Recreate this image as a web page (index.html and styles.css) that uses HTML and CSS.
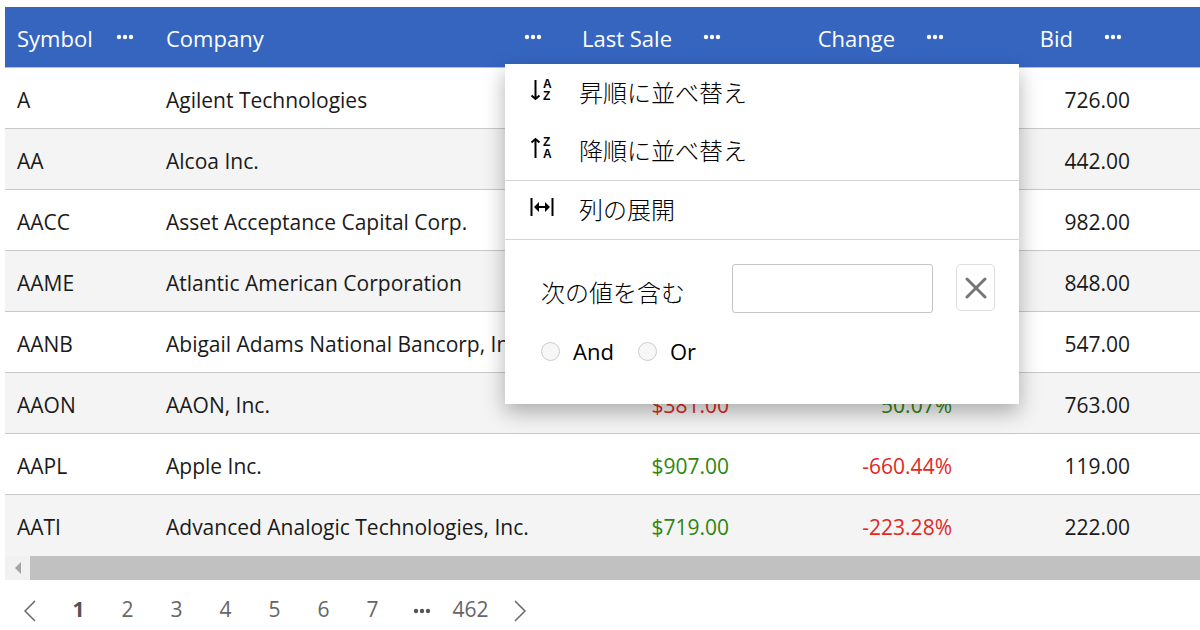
FILE: index.html
```html
<!DOCTYPE html>
<html lang="ja">
<head>
  <meta charset="utf-8">
  <title>Grid</title>
  <link rel="stylesheet" href="styles.css">
</head>
<body>
  <!-- Shared icons -->
  <svg class="icon-defs" aria-hidden="true">
    <symbol id="dots" viewBox="0 0 18 6">
      <circle cx="3" cy="3" r="2.200" />
      <circle cx="9" cy="3" r="2.200" />
      <circle cx="15" cy="3" r="2.200" />
    </symbol>
  </svg>

  <div class="grid">
    <table class="grid-table">
      <colgroup>
        <col class="col-symbol">
        <col class="col-company">
        <col class="col-sale">
        <col class="col-change">
        <col class="col-bid">
        <col>
      </colgroup>
      <thead>
        <tr>
          <th><div class="head"><span>Symbol</span><button class="menu-btn" aria-label="Symbol"><svg><use href="#dots" /></svg></button></div></th>
          <th><div class="head"><span>Company</span><button class="menu-btn" aria-label="Company"><svg><use href="#dots" /></svg></button></div></th>
          <th><div class="head head-num"><span>Last Sale</span><button class="menu-btn" aria-label="Last Sale"><svg><use href="#dots" /></svg></button></div></th>
          <th><div class="head head-num"><span>Change</span><button class="menu-btn" aria-label="Change"><svg><use href="#dots" /></svg></button></div></th>
          <th><div class="head head-num"><span>Bid</span><button class="menu-btn" aria-label="Bid"><svg><use href="#dots" /></svg></button></div></th>
          <th></th>
        </tr>
      </thead>
      <tbody>
        <tr><td>A</td><td>Agilent Technologies</td><td class="num"></td><td class="num"></td><td class="num">726.00</td><td></td></tr>
        <tr><td>AA</td><td>Alcoa Inc.</td><td class="num"></td><td class="num"></td><td class="num">442.00</td><td></td></tr>
        <tr><td>AACC</td><td>Asset Acceptance Capital Corp.</td><td class="num"></td><td class="num"></td><td class="num">982.00</td><td></td></tr>
        <tr><td>AAME</td><td>Atlantic American Corporation</td><td class="num"></td><td class="num"></td><td class="num">848.00</td><td></td></tr>
        <tr><td>AANB</td><td>Abigail Adams National Bancorp, Inc.</td><td class="num"></td><td class="num"></td><td class="num">547.00</td><td></td></tr>
        <tr><td>AAON</td><td>AAON, Inc.</td><td class="num down">$381.00</td><td class="num up">50.07%</td><td class="num">763.00</td><td></td></tr>
        <tr><td>AAPL</td><td>Apple Inc.</td><td class="num up">$907.00</td><td class="num down">-660.44%</td><td class="num">119.00</td><td></td></tr>
        <tr><td>AATI</td><td>Advanced Analogic Technologies, Inc.</td><td class="num up">$719.00</td><td class="num down">-223.28%</td><td class="num">222.00</td><td></td></tr>
      </tbody>
    </table>

    <div class="scrollbar">
      <div class="scroll-arrow"><svg width="6" height="12"><path d="M6 0v12L0 6z" fill="#a3a3a3" /></svg></div>
      <div class="scroll-thumb"></div>
    </div>

    <!-- Column menu -->
    <div class="popup">
      <div class="popup-group">
        <button class="popup-item">
          <svg class="item-icon" width="24" height="28">
            <path d="M5.500 4v19M1.500 19.500l4 3.500 4-3.500" fill="none" stroke="#000" stroke-width="2" />
            <text x="13" y="12">A</text>
            <text x="13" y="24">Z</text>
          </svg>
          <span>昇順に並べ替え</span>
        </button>
        <button class="popup-item">
          <svg class="item-icon" width="24" height="28">
            <path d="M5.500 24V5M1.500 8.500l4-3.500 4 3.500" fill="none" stroke="#000" stroke-width="2" />
            <text x="13" y="12">Z</text>
            <text x="13" y="24">A</text>
          </svg>
          <span>降順に並べ替え</span>
        </button>
      </div>
      <div class="popup-group">
        <button class="popup-item">
          <svg class="item-icon" width="24" height="28">
            <path d="M1.500 5v18M22.500 5v18M7 14h10" fill="none" stroke="#000" stroke-width="2" />
            <path d="M4 14l5-5v10zM20 14l-5-5v10z" />
          </svg>
          <span>列の展開</span>
        </button>
      </div>
      <div class="filter">
        <div class="filter-row">
          <label for="filter-value">次の値を含む</label>
          <input class="filter-input" type="text" id="filter-value">
          <button class="clear-btn" aria-label="Clear">
            <svg width="22" height="22"><path d="M2 2l18 18M20 2L2 20" stroke="#777" stroke-width="3" stroke-linecap="round" /></svg>
          </button>
        </div>
        <div class="radios">
          <label><input type="radio" name="op">And</label>
          <label><input type="radio" name="op">Or</label>
        </div>
      </div>
    </div>
  </div>

  <nav class="pager">
    <button aria-label="Previous"><svg class="chevron" width="12" height="22"><path d="M11 1L1 11l10 10" /></svg></button>
    <button class="page current">1</button>
    <button class="page">2</button>
    <button class="page">3</button>
    <button class="page">4</button>
    <button class="page">5</button>
    <button class="page">6</button>
    <button class="page">7</button>
    <button aria-label="More"><svg class="more" width="18" height="6"><use href="#dots" /></svg></button>
    <button class="page">462</button>
    <button aria-label="Next"><svg class="chevron" width="12" height="22"><path d="M1 1l10 10L1 21" /></svg></button>
  </nav>
</body>
</html>
```
FILE: styles.css
```css
* {
  box-sizing: border-box;
}
body {
  margin: 7px 0 0 5px;
  background-color: #fff;
  color: #1a1a1a;
  font-family: "Open Sans", "Noto Sans CJK JP", sans-serif;
  font-size: 21px;
  line-height: 30px;
  overflow: hidden;
}
button {
  padding: 0;
  border: none;
  background: none;
  color: inherit;
  font: inherit;
  cursor: pointer;
}
svg {
  display: block;
}
.icon-defs {
  position: absolute;
  width: 0;
  height: 0;
}
.grid {
  position: relative;
}
.grid-table {
  width: 100%;
  table-layout: fixed;
  border-collapse: separate;
  border-spacing: 0;
}
.col-symbol {
  width: 149px;
}
.col-company {
  width: 408px;
}
.col-sale {
  width: 179px;
}
.col-change {
  width: 223px;
}
.col-bid {
  width: 178px;
}
th {
  height: 61px;
  padding: 2px 20px 0 12px;
  border-bottom: 1px solid #b5bdd0;
  background-color: #3665c0;
  color: #fff;
  font-size: 22px;
  font-weight: normal;
  text-align: left;
}
.head {
  display: flex;
  align-items: center;
  justify-content: space-between;
  white-space: nowrap;
}
.head-num {
  justify-content: flex-end;
  gap: 31px;
}
.menu-btn {
  padding-bottom: 2px;
}
.menu-btn svg {
  width: 18px;
  height: 6px;
  fill: #fff;
}
td {
  height: 61px;
  padding: 3px 12px 0;
  border-bottom: 1px solid #c8c8cc;
  white-space: nowrap;
}
tbody tr:nth-child(even) {
  background-color: #f4f4f4;
}
tbody tr:last-child td {
  border-bottom-color: #f4f4f4;
}
.num {
  text-align: right;
}
.up {
  color: #2f850f;
}
.down {
  color: #e0291f;
}
.scrollbar {
  display: flex;
  height: 24px;
  background-color: #f1f1f1;
}
.scroll-arrow {
  display: flex;
  align-items: center;
  justify-content: center;
  width: 25px;
}
.scroll-thumb {
  flex: 1;
  background-color: #c1c1c1;
}
.popup {
  position: absolute;
  top: 57px;
  left: 500px;
  width: 514px;
  background-color: #fff;
  color: #000;
  font-size: 24px;
  box-shadow: 0 8px 20px rgba(0, 0, 0, 0.3);
}
.popup-group {
  border-bottom: 1px solid #d4d4d4;
}
.popup-item {
  display: flex;
  align-items: center;
  gap: 25px;
  width: 100%;
  height: 58px;
  padding: 0 25px;
  font-weight: 300;
}
.item-icon {
  margin-bottom: 6px;
}
.item-icon text {
  font: bold 12px "Liberation Sans", sans-serif;
}
.filter {
  padding: 24px 24px 38px 36px;
}
.filter-row {
  display: flex;
  align-items: flex-start;
  justify-content: space-between;
}
.filter-row label {
  padding-top: 14px;
  font-weight: 300;
}
.filter-input {
  width: 201px;
  height: 49px;
  margin-left: 24px;
  padding: 0 12px;
  border: 1px solid #c4c4c4;
  border-radius: 3px;
  font: inherit;
}
.clear-btn {
  display: flex;
  align-items: center;
  justify-content: center;
  width: 39px;
  height: 47px;
  border: 1px solid #ddd;
  border-radius: 5px;
}
.radios {
  display: flex;
  gap: 24px;
  padding-top: 23px;
  font-size: 22px;
}
.radios label {
  display: flex;
  align-items: center;
  gap: 13px;
}
.radios input {
  appearance: none;
  width: 19px;
  height: 19px;
  margin: 0;
  border: 1px solid #ccc;
  border-radius: 50%;
  background-color: #f7f7f7;
}
.pager {
  display: flex;
  color: #666;
}
.pager button {
  display: flex;
  align-items: center;
  justify-content: center;
  width: 49px;
  height: 62px;
}
.pager .page {
  padding-bottom: 4px;
}
.pager .current {
  font-weight: bold;
  color: #555;
}
.chevron {
  fill: none;
  stroke: #666;
  stroke-width: 1.5;
}
.more {
  fill: #555;
}
```
